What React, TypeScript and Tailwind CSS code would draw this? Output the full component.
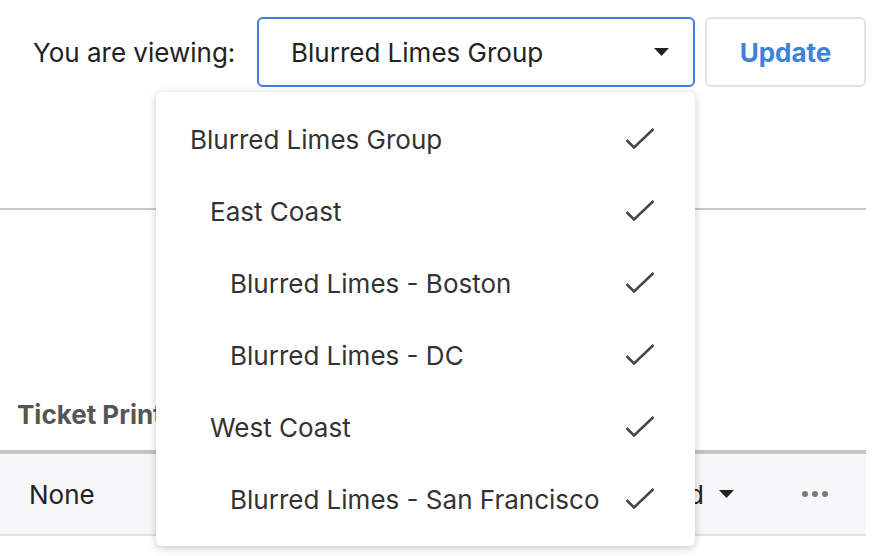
import React from 'react'

// ─────────────────────────────────────────────────────────────────────────────
// DATA
// ─────────────────────────────────────────────────────────────────────────────

interface LocationOption {
  id: string
  label: string
  depth: 0 | 1 | 2
}

const options: LocationOption[] = [
  { id: 'group', label: 'Blurred Limes Group', depth: 0 },
  { id: 'east', label: 'East Coast', depth: 1 },
  { id: 'boston', label: 'Blurred Limes - Boston', depth: 2 },
  { id: 'dc', label: 'Blurred Limes - DC', depth: 2 },
  { id: 'west', label: 'West Coast', depth: 1 },
  { id: 'sf', label: 'Blurred Limes - San Francisco', depth: 2 },
]

const indent = {
  0: 'pl-[34px]',
  1: 'pl-[54px]',
  2: 'pl-[74px]',
}

// ─────────────────────────────────────────────────────────────────────────────
// ICONS
// ─────────────────────────────────────────────────────────────────────────────

function Caret({ className }: { className?: string }) {
  return (
    <svg width="15" height="8" viewBox="0 0 15 8" className={className}>
      <path d="M0 0 H15 L7.5 8 Z" fill="#222" />
    </svg>
  )
}

function Check() {
  return (
    <svg width="30" height="22" viewBox="0 0 30 22" fill="none">
      <polyline
        points="1.5,12 9,19.5 28.5,1"
        stroke="#474747"
        strokeWidth="2.6"
        strokeLinecap="butt"
        strokeLinejoin="miter"
      />
    </svg>
  )
}

// ─────────────────────────────────────────────────────────────────────────────
// APP
// ─────────────────────────────────────────────────────────────────────────────

export default function App() {
  return (
    <div className="relative w-[888px] h-[556px] overflow-hidden bg-white font-['Inter',sans-serif] text-[26px] text-[#222]">
      {/* Top bar */}
      <div className="flex items-center pl-[33px] pt-[17px] w-[866px]">
        <span className="w-[208px] whitespace-nowrap">You are viewing:</span>
        <div className="ml-[16px] w-[438px] h-[70px] border-2 border-[#3b7dd8] rounded-[6px] flex items-center justify-between pl-[32px] pr-[24px]">
          <span>Blurred Limes Group</span>
          <Caret />
        </div>
        <button className="ml-[10px] w-[161px] h-[70px] border-2 border-[#e1e1e6] rounded-[6px] font-bold text-[#3c83da]">
          Update
        </button>
      </div>

      {/* Divider */}
      <div className="mt-[121px] h-[2px] w-[866px] bg-[#c9c8d0]" />

      {/* Table */}
      <div className="mt-[168px] w-[866px]">
        <div className="h-[76px] flex items-center pl-[17px] border-b-4 border-[#c4c4c4]">
          <span className="font-bold text-[#555]">Ticket Printer</span>
        </div>
        <div className="h-[82px] flex items-center bg-[#f7f7f9] border-b-2 border-[#e2e2e2]">
          <span className="pl-[29px] w-[300px]">None</span>
          <div className="flex-1 flex items-center justify-end gap-[15px] pr-[28px]">
            <span>Assigned</span>
            <Caret />
          </div>
          <div className="w-[104px] flex justify-center gap-[4px] pl-[2px]">
            <span className="w-[6px] h-[6px] rounded-full bg-[#7a7a7a]" />
            <span className="w-[6px] h-[6px] rounded-full bg-[#7a7a7a]" />
            <span className="w-[6px] h-[6px] rounded-full bg-[#7a7a7a]" />
          </div>
        </div>
      </div>

      {/* Dropdown menu */}
      <div className="absolute left-[156px] top-[92px] w-[539px] py-[11px] bg-white rounded-[6px] shadow-[0_2px_8px_rgba(0,0,0,0.22)]">
        {options.map(option => (
          <div
            key={option.id}
            className={`h-[72px] flex items-center justify-between pr-[40px] text-[#333] ${indent[option.depth]}`}
          >
            <span>{option.label}</span>
            <Check />
          </div>
        ))}
      </div>
    </div>
  )
}
